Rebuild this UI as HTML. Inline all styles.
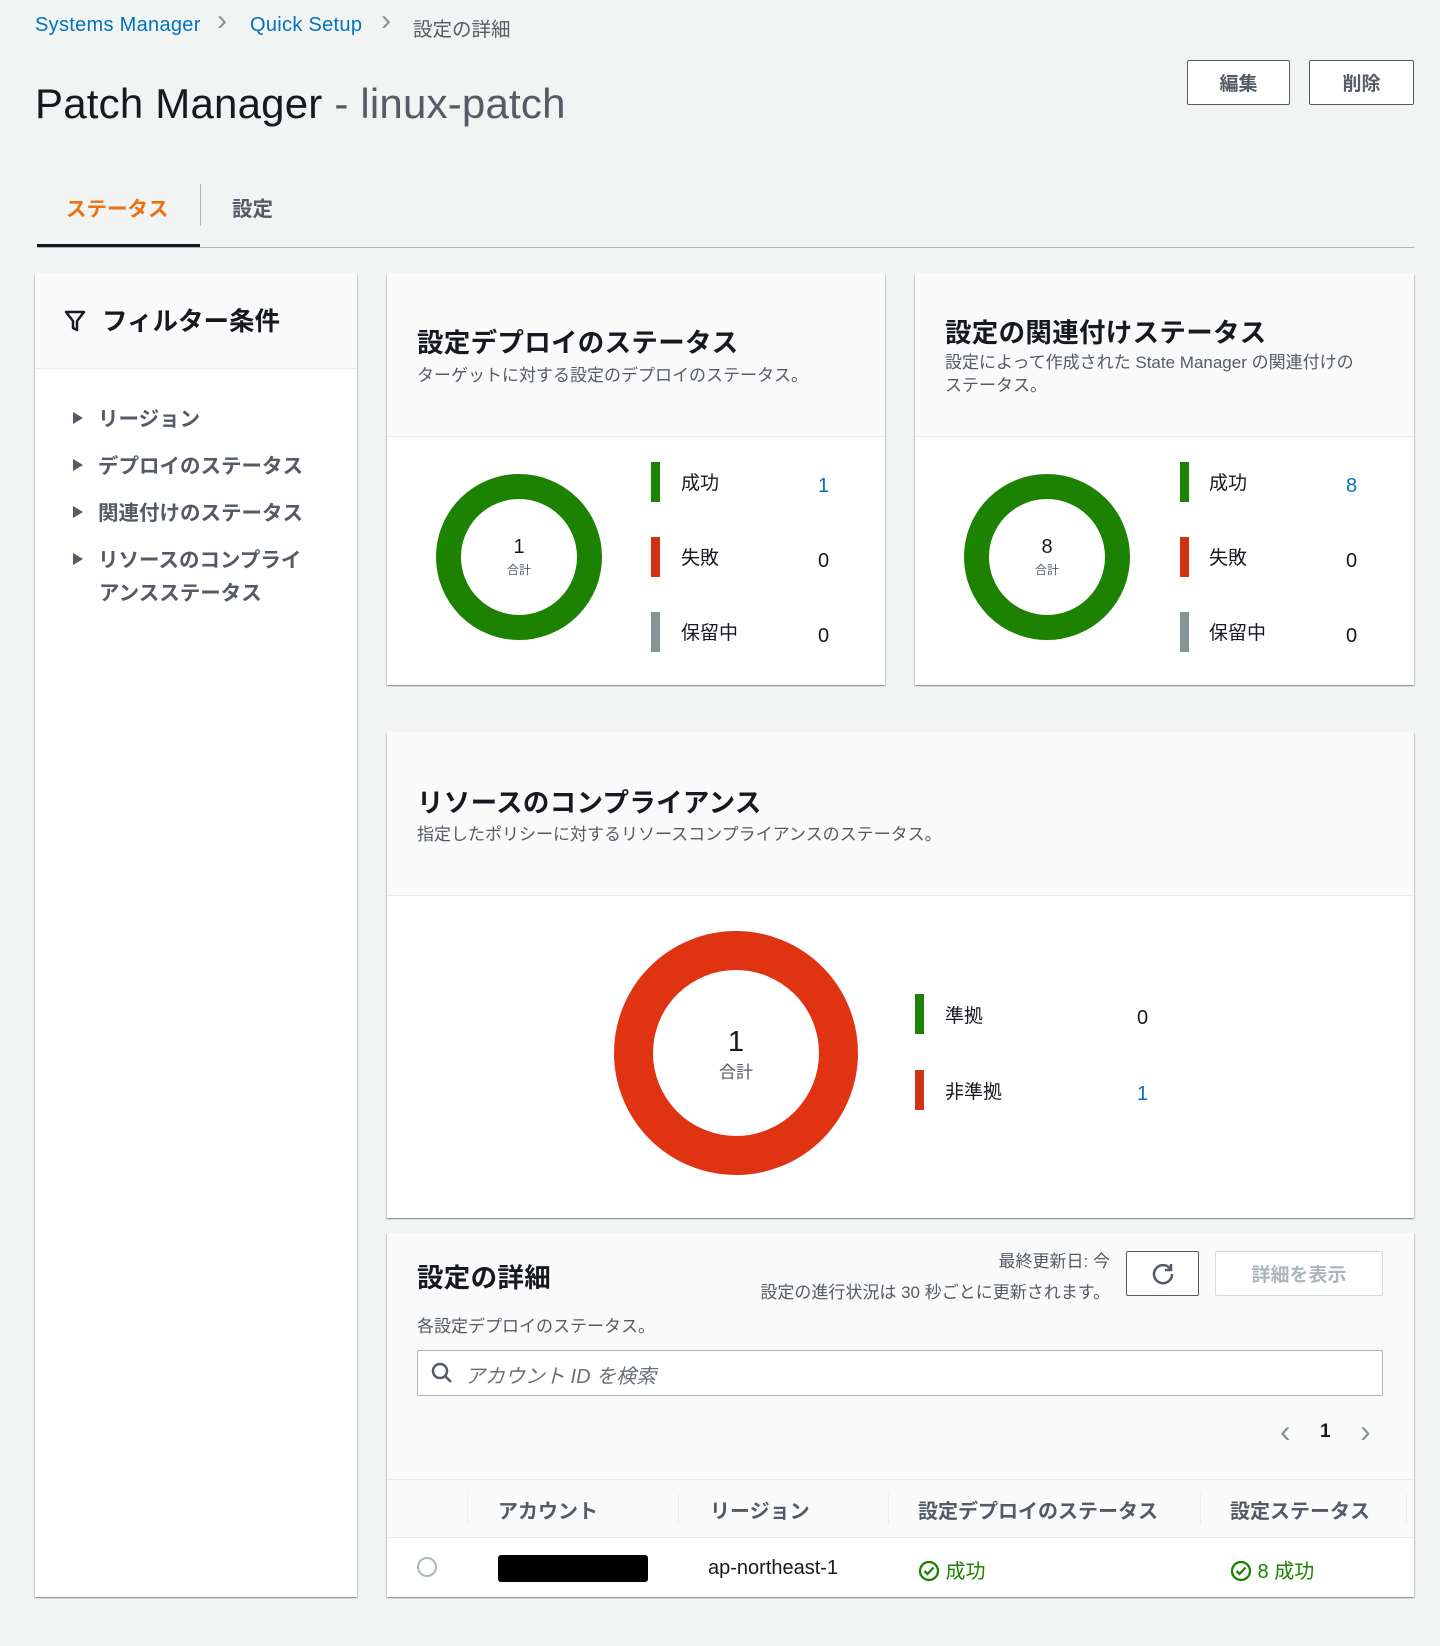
<!DOCTYPE html>
<html><head><meta charset="utf-8"><style>
*{margin:0;padding:0;box-sizing:border-box}
body{width:1440px;height:1646px;background:#f2f3f3;font-family:"Liberation Sans","Noto Sans CJK JP",sans-serif;color:#16191f;position:relative;overflow:hidden}
.a{position:absolute;white-space:nowrap}
.card{position:absolute;background:#fff;box-shadow:0 1px 1px 0 rgba(0,28,36,.3),1px 1px 1px 0 rgba(0,28,36,.15),-1px 1px 1px 0 rgba(0,28,36,.15)}
.hd{position:absolute;left:0;right:0;top:0;background:#fafafa;border-bottom:1px solid #eaeded}
.btn{position:absolute;border:1px solid #545b64;background:#fff;border-radius:2px;font-weight:bold;font-size:19px;color:#545b64;display:flex;align-items:center;justify-content:center}
.t{font-weight:bold;font-size:26.5px;letter-spacing:0.3px}
.s{font-size:17px;color:#545b64}
.bar{position:absolute;width:9px;height:40px}
.lg{font-size:19px}
.num{font-size:20px;margin-top:5px}
.li{font-size:20.5px;font-weight:bold;color:#545b64}
.tri{display:inline-block;width:0;height:0;border-left:10px solid #545b64;border-top:6px solid transparent;border-bottom:6px solid transparent;margin-right:15px;vertical-align:2px}
.th{font-size:20px;font-weight:bold;color:#545b64}
.sep{position:absolute;width:1px;background:#eaeded;top:1494px;height:30px}
.cv{position:absolute;font-size:30px;color:#879596;top:4px}
</style></head><body>
<div class="a" style="left:35px;top:14px;font-size:20px;color:#0073bb;letter-spacing:0.3px">Systems Manager</div>
<div class="cv" style="left:217px">&#x203A;</div>
<div class="a" style="left:250px;top:14px;font-size:20px;color:#0073bb;letter-spacing:0.3px">Quick Setup</div>
<div class="cv" style="left:381px">&#x203A;</div>
<div class="a" style="left:413px;top:13px;font-size:19.5px;color:#545b64">設定の詳細</div>
<div class="a" style="left:35px;top:80px;font-size:42px;letter-spacing:0.2px">Patch Manager <span style="color:#545b64">- linux-patch</span></div>
<div class="btn" style="left:1187px;top:60px;width:103px;height:45px">編集</div>
<div class="btn" style="left:1309px;top:60px;width:105px;height:45px">削除</div>

<div class="a" style="left:66px;top:192px;font-size:20.5px;font-weight:bold;color:#ec7211">ステータス</div>
<div class="a" style="left:200px;top:184px;width:1px;height:42px;background:#aab7b8"></div>
<div class="a" style="left:232px;top:192px;font-size:20.5px;font-weight:bold;color:#545b64">設定</div>
<div class="a" style="left:37px;top:247px;width:1377px;height:1px;background:#aab7b8"></div>
<div class="a" style="left:37px;top:244px;width:163px;height:3px;background:#16191f"></div>

<div class="card" style="left:35px;top:274px;width:322px;height:1323px">
 <div class="hd" style="height:95px"></div>
 <svg class="a" style="left:29px;top:35px" width="22" height="24" viewBox="0 0 22 24"><path d="M2 3h18l-7 9v9l-4-2v-7z" fill="none" stroke="#16191f" stroke-width="2.5" stroke-linejoin="round"/></svg>
 <div class="a" style="left:67px;top:27px;font-size:25.5px;font-weight:bold">フィルター条件</div>
 <div class="a li" style="left:38px;top:128px"><span class="tri"></span>リージョン</div>
 <div class="a li" style="left:38px;top:175px"><span class="tri"></span>デプロイのステータス</div>
 <div class="a li" style="left:38px;top:222px"><span class="tri"></span>関連付けのステータス</div>
 <div class="a li" style="left:38px;top:269px"><span class="tri"></span>リソースのコンプライ</div>
 <div class="a li" style="left:64px;top:302px">アンスステータス</div>
</div>

<div class="card" style="left:387px;top:274px;width:498px;height:411px">
 <div class="hd" style="height:163px"></div>
 <div class="a t" style="left:30px;top:47px">設定デプロイのステータス</div>
 <div class="a s" style="left:30px;top:87px">ターゲットに対する設定のデプロイのステータス。</div>
 <svg class="a" style="left:49px;top:200px" width="166" height="166"><circle cx="83" cy="83" r="70.5" fill="none" stroke="#1d8102" stroke-width="25"/></svg>
 <div class="a" style="left:107px;top:262px;width:50px;text-align:center;font-size:20px">1</div>
 <div class="a" style="left:107px;top:287px;width:50px;text-align:center;font-size:12px;color:#545b64">合計</div>
 <div class="bar" style="left:264px;top:188px;background:#1d8102"></div>
 <div class="a lg" style="left:294px;top:194px">成功</div><div class="a num" style="left:431px;top:196px;color:#0073bb">1</div>
 <div class="bar" style="left:264px;top:263px;background:#d13212"></div>
 <div class="a lg" style="left:294px;top:269px">失敗</div><div class="a num" style="left:431px;top:271px">0</div>
 <div class="bar" style="left:264px;top:338px;background:#879596"></div>
 <div class="a lg" style="left:294px;top:344px">保留中</div><div class="a num" style="left:431px;top:346px">0</div>
</div>

<div class="card" style="left:915px;top:274px;width:499px;height:411px">
 <div class="hd" style="height:163px"></div>
 <div class="a t" style="left:30px;top:37px">設定の関連付けステータス</div>
 <div class="a s" style="left:30px;top:77px;line-height:23px">設定によって作成された State Manager の関連付けの<br>ステータス。</div>
 <svg class="a" style="left:49px;top:200px" width="166" height="166"><circle cx="83" cy="83" r="70.5" fill="none" stroke="#1d8102" stroke-width="25"/></svg>
 <div class="a" style="left:107px;top:262px;width:50px;text-align:center;font-size:20px">8</div>
 <div class="a" style="left:107px;top:287px;width:50px;text-align:center;font-size:12px;color:#545b64">合計</div>
 <div class="bar" style="left:265px;top:188px;background:#1d8102"></div>
 <div class="a lg" style="left:294px;top:194px">成功</div><div class="a num" style="left:431px;top:196px;color:#0073bb">8</div>
 <div class="bar" style="left:265px;top:263px;background:#d13212"></div>
 <div class="a lg" style="left:294px;top:269px">失敗</div><div class="a num" style="left:431px;top:271px">0</div>
 <div class="bar" style="left:265px;top:338px;background:#879596"></div>
 <div class="a lg" style="left:294px;top:344px">保留中</div><div class="a num" style="left:431px;top:346px">0</div>
</div>

<div class="card" style="left:387px;top:732px;width:1027px;height:486px">
 <div class="hd" style="height:164px"></div>
 <div class="a t" style="left:30px;top:49px">リソースのコンプライアンス</div>
 <div class="a s" style="left:30px;top:88px">指定したポリシーに対するリソースコンプライアンスのステータス。</div>
 <svg class="a" style="left:227px;top:199px" width="244" height="244"><circle cx="122" cy="122" r="102.5" fill="none" stroke="#df3312" stroke-width="39"/></svg>
 <div class="a" style="left:324px;top:294px;width:50px;text-align:center;font-size:29px">1</div>
 <div class="a" style="left:324px;top:326px;width:50px;text-align:center;font-size:17px;color:#545b64">合計</div>
 <div class="bar" style="left:528px;top:262px;background:#1d8102"></div>
 <div class="a lg" style="left:558px;top:269px">準拠</div><div class="a num" style="left:750px;top:270px">0</div>
 <div class="bar" style="left:528px;top:338px;background:#d13212"></div>
 <div class="a lg" style="left:558px;top:345px">非準拠</div><div class="a num" style="left:750px;top:346px;color:#0073bb">1</div>
</div>

<div class="card" style="left:387px;top:1233px;width:1027px;height:364px;background:#fafafa">
 <div class="a t" style="left:30px;top:23px">設定の詳細</div>
 <div class="a s" style="right:304px;top:14px">最終更新日: 今</div>
 <div class="a s" style="right:304px;top:45px">設定の進行状況は 30 秒ごとに更新されます。</div>
 <div class="btn" style="left:739px;top:18px;width:73px;height:45px"><svg width="26" height="26" viewBox="0 0 26 26"><path d="M20 7.5A9 9 0 1 0 22 13" fill="none" stroke="#545b64" stroke-width="2.5"/><path d="M21 3v6h-6" fill="none" stroke="#545b64" stroke-width="2.5"/></svg></div>
 <div class="btn" style="left:828px;top:18px;width:168px;height:45px;border-color:#d5dbdb;color:#aab7b8">詳細を表示</div>
 <div class="a s" style="left:30px;top:79px">各設定デプロイのステータス。</div>
 <div class="a" style="left:30px;top:117px;width:966px;height:46px;background:#fff;border:1px solid #aab7b8;border-radius:2px"></div>
 <svg class="a" style="left:43px;top:128px" width="24" height="24"><circle cx="10" cy="10" r="7" fill="none" stroke="#545b64" stroke-width="2.5"/><path d="M15 15l6 6" stroke="#545b64" stroke-width="2.5"/></svg>
 <div class="a" style="left:78px;top:127px;font-size:20px;font-style:italic;color:#687078">アカウント ID を検索</div>
 <div class="a" style="left:893px;top:180px;font-size:32px;color:#879596">&#x2039;</div>
 <div class="a" style="left:933px;top:188px;font-size:19px;font-weight:bold">1</div>
 <div class="a" style="left:973px;top:180px;font-size:32px;color:#879596">&#x203A;</div>
 <div class="a" style="left:0;top:246px;width:1027px;height:1px;background:#eaeded"></div>
 <div class="a" style="left:0;top:304px;width:1027px;height:60px;background:#fff;border-top:1px solid #eaeded"></div>
 <div class="a th" style="left:111px;top:262px">アカウント</div>
 <div class="a th" style="left:323px;top:262px">リージョン</div>
 <div class="a th" style="left:531px;top:262px">設定デプロイのステータス</div>
 <div class="a th" style="left:843px;top:262px">設定ステータス</div>
 <div class="a" style="left:30px;top:324px;width:20px;height:20px;border:2px solid #aab7b8;border-radius:50%"></div>
 <div class="a" style="left:111px;top:322px;width:150px;height:27px;background:#000;border-radius:3px"></div>
 <div class="a" style="left:321px;top:324px;font-size:20px">ap-northeast-1</div>
 <div class="a" style="left:531px;top:322px;font-size:20px;color:#1d8102"><svg width="22" height="22" style="vertical-align:-4px" viewBox="0 0 22 22"><circle cx="11" cy="11" r="9" fill="none" stroke="#1d8102" stroke-width="2.3"/><path d="M6.5 11l3 3 6-6.5" fill="none" stroke="#1d8102" stroke-width="2.3"/></svg> 成功</div>
 <div class="a" style="left:843px;top:322px;font-size:20px;color:#1d8102"><svg width="22" height="22" style="vertical-align:-4px" viewBox="0 0 22 22"><circle cx="11" cy="11" r="9" fill="none" stroke="#1d8102" stroke-width="2.3"/><path d="M6.5 11l3 3 6-6.5" fill="none" stroke="#1d8102" stroke-width="2.3"/></svg> 8 成功</div>
</div>
<div class="sep" style="left:467px"></div><div class="sep" style="left:678px"></div><div class="sep" style="left:888px"></div><div class="sep" style="left:1200px"></div><div class="sep" style="left:1406px"></div>
</body></html>
